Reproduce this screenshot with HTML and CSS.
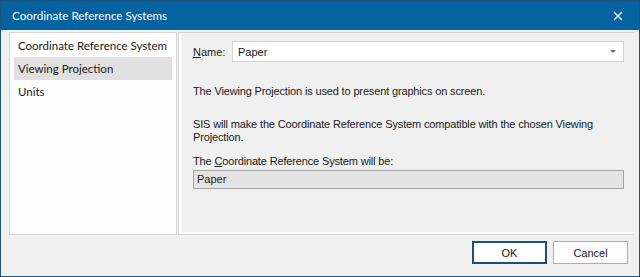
FILE: index.html
```html
<!DOCTYPE html>
<html>
    <head>
        <title>Coordinate Reference Systems</title>
        <meta charset="UTF-8">
        <link rel="stylesheet" href="styles.css">
    </head>
    <body>
        <div class="window">
            <div class="titlebar">
                <span class="title">Coordinate Reference Systems</span>
                <svg class="close" width="10" height="10" viewBox="0 0 10 10">
                    <path d="M1 1 L9 9 M9 1 L1 9" stroke="#fff" stroke-width="1.3" fill="none"/>
                </svg>
            </div>

            <div class="panels">
                <ul class="nav-list">
                    <li>Coordinate Reference System</li>
                    <li class="selected">Viewing Projection</li>
                    <li>Units</li>
                </ul>

                <div class="page">
                    <div class="name-row">
                        <label><u>N</u>ame:</label>
                        <div class="combo">
                            <span>Paper</span>
                            <span class="arrow"></span>
                        </div>
                    </div>

                    <p class="info first">The Viewing Projection is used to present graphics on screen.</p>
                    <p class="info second">SIS will make the Coordinate Reference System compatible with the chosen Viewing Projection.</p>

                    <p class="info result-label">The <u>C</u>oordinate Reference System will be:</p>
                    <div class="readonly">Paper</div>
                </div>
            </div>

            <div class="buttons">
                <button class="btn default">OK</button>
                <button class="btn">Cancel</button>
            </div>
        </div>
    </body>
</html>
```

FILE: styles.css
```css
:root {
    --title-color: #0263a0;
    --frame-color: #1d527f;
    --face-color: #f0f0f0;
    --text-color: #1a1a1a;
}

* {
    box-sizing: border-box;
    margin: 0;
    padding: 0;
}

body {
    font-family: 'Lato', sans-serif;
    font-size: 11.5px;
    color: var(--text-color);
    background: var(--face-color);
}

.window {
    width: 640px;
    height: 277px;
    border: 1px solid var(--frame-color);
    background: var(--face-color);
    display: flex;
    flex-direction: column;
}

.titlebar {
    height: 29px;
    background: var(--title-color);
    color: #fff;
    display: flex;
    align-items: center;
    justify-content: space-between;
    padding: 0 16px 0 11px;
    font-size: 11.6px;
}

.close {
    display: block;
}

.panels {
    display: flex;
    margin: 2px 5px 0 8px;
    height: 203px;
}

.nav-list {
    list-style: none;
    width: 168px;
    background: #fdfdfd;
    border: 1px solid #d6d6d6;
    padding: 1px 4px;
}

.nav-list li {
    height: 23px;
    line-height: 23px;
    padding-left: 4px;
    white-space: nowrap;
}

.nav-list li.selected {
    background: #e0e0e0;
}

/* right side uses the classic dialog font */
.page {
    flex: 1;
    margin-left: 1px;
    border: 1px solid #d6d6d6;
    border-right: none;
    box-shadow: inset 2px -2px 0 #fdfdfd;
    padding: 8px 10px 0 14px;
    font-family: 'Liberation Sans', Arial, sans-serif;
    font-size: 11px;
}

.name-row {
    display: flex;
    align-items: center;
}

.name-row label {
    width: 39px;
}

.combo {
    flex: 1;
    height: 21px;
    background: #fff;
    border: 1px solid #d4d4d4;
    display: flex;
    align-items: center;
    justify-content: space-between;
    padding: 0 7px 0 5px;
}

.arrow {
    width: 0;
    height: 0;
    border-left: 3px solid transparent;
    border-right: 3px solid transparent;
    border-top: 3px solid #6a6a6a;
}

.info {
    line-height: 13px;
    padding-right: 10px;
    letter-spacing: -0.15px;
}

.info.first {
    margin-top: 23px;
}

.info.second {
    margin-top: 20px;
}

.result-label {
    margin-top: 11px;
}

.readonly {
    margin-top: 2px;
    height: 19px;
    line-height: 17px;
    background: #e3e3e3;
    border: 1px solid #a3a3a3;
    padding-left: 3px;
}

.buttons {
    display: flex;
    justify-content: flex-end;
    gap: 6px;
    margin-top: 6px;
    padding-right: 11px;
}

.btn {
    width: 75px;
    height: 23px;
    font-family: 'Liberation Sans', Arial, sans-serif;
    font-size: 11px;
    color: var(--text-color);
    background: #fdfdfd;
    border: 1px solid #adadad;
}

.btn.default {
    border: 2px solid #1c4f7c;
}
```
